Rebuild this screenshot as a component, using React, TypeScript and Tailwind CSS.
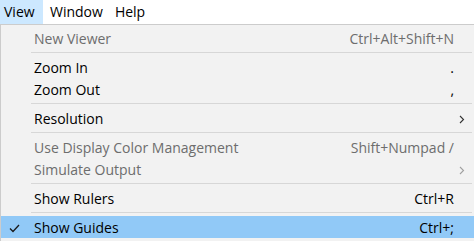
import React from "react";

type Item =
  | { type: "sep" }
  | { type: "item"; label: string; shortcut?: string; disabled?: boolean; sub?: boolean; checked?: boolean; active?: boolean };

const items: Item[] = [
  { type: "item", label: "New Viewer", shortcut: "Ctrl+Alt+Shift+N", disabled: true },
  { type: "sep" },
  { type: "item", label: "Zoom In", shortcut: "." },
  { type: "item", label: "Zoom Out", shortcut: "," },
  { type: "sep" },
  { type: "item", label: "Resolution", sub: true },
  { type: "sep" },
  { type: "item", label: "Use Display Color Management", shortcut: "Shift+Numpad /", disabled: true },
  { type: "item", label: "Simulate Output", sub: true, disabled: true },
  { type: "sep" },
  { type: "item", label: "Show Rulers", shortcut: "Ctrl+R" },
  { type: "sep" },
  { type: "item", label: "Show Guides", shortcut: "Ctrl+;", checked: true, active: true },
];

function Chevron({ color }: { color: string }) {
  return (
    <svg width="6" height="9" viewBox="0 0 6 9" className="block">
      <path d="M1 1 L4.5 4.5 L1 8" fill="none" stroke={color} strokeWidth="1.1" />
    </svg>
  );
}

function Check() {
  return (
    <svg width="11" height="9" viewBox="0 0 11 9" className="block">
      <path d="M1 4.5 L4 7.5 L10 1" fill="none" stroke="#1a1a1a" strokeWidth="1.3" />
    </svg>
  );
}

export default function App() {
  return (
    <div
      className="w-[474px] h-[241px] overflow-hidden bg-white text-[14px] leading-none text-black"
      style={{ fontFamily: '"Open Sans", Lato, sans-serif' }}
    >
      <div className="flex h-[24px] items-stretch bg-white">
        <div className="flex items-center pl-[4px] w-[43px] bg-[#cce8ff]">View</div>
        <div className="flex items-center pl-[7px] pr-[12px]">Window</div>
        <div className="flex items-center">Help</div>
      </div>
      <div className="border-t border-l border-[#cccccc] bg-[#f2f2f2] pt-[2px] h-[217px]">
        {items.map((it, i) =>
          it.type === "sep" ? (
            <div key={i} className="h-[7px] flex items-center pl-[30px] pr-[2px]">
              <div className="h-px w-full bg-[#d7d7d7]" />
            </div>
          ) : (
            <div
              key={i}
              className={`flex h-[22px] items-center pt-[2px] ${it.active ? "bg-[#91c9f7]" : ""} ${
                it.disabled ? "text-[#6d6d6d]" : "text-black"
              }`}
            >
              <div className="w-[33px] flex justify-start pl-[8px]">{it.checked ? <Check /> : null}</div>
              <div className="flex-1">{it.label}</div>
              {it.sub ? (
                <div className="pr-[9px] flex items-center">
                  <Chevron color={it.disabled ? "#a0a0a0" : "#333"} />
                </div>
              ) : (
                <div className="pr-[20px]">{it.shortcut}</div>
              )}
            </div>
          )
        )}
      </div>
    </div>
  );
}
